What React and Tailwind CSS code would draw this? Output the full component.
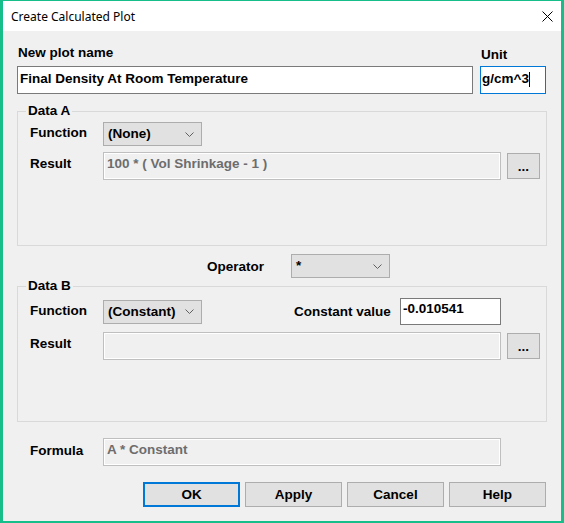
import React from "react";

const F = { fontFamily: '"Liberation Sans", Arial, sans-serif' };

function Chevron() {
  return (
    <svg width="9" height="5" viewBox="0 0 9 5" className="shrink-0">
      <path d="M0.5 0.5 L4.5 4.5 L8.5 0.5" fill="none" stroke="#606060" strokeWidth="1" />
    </svg>
  );
}

function Select({ value, w = "w-[99px]" }) {
  return (
    <div className={`${w} h-[24px] bg-[#e1e1e1] border border-[#adadad] flex items-center pl-[4px] pr-[7px] justify-between`}>
      <span className="text-[13.5px] font-bold text-black leading-none">{value}</span>
      <Chevron />
    </div>
  );
}

function Disabled({ value, w = "w-[398px]" }) {
  return (
    <div className={`${w} h-[28px] bg-[#f0f0f0] border border-[#bfbfbf] shadow-[inset_0_0_0_1px_#ffffff] flex items-center pl-[3px]`}>
      <span className="text-[13.5px] font-bold text-[#6d6d6d] leading-none -mt-[4px]">{value}</span>
    </div>
  );
}

function Dots() {
  return (
    <div className="ml-[6px] w-[33px] h-[26px] bg-[#e1e1e1] border border-[#adadad] flex items-center justify-center">
      <span className="text-[13.5px] font-bold text-black leading-none mt-[1px]">...</span>
    </div>
  );
}

function Label({ children, w = "w-[73px]", m = "-mt-[2px]" }) {
  return <div className={`${w} ${m} text-[13.5px] font-bold text-black leading-none`}>{children}</div>;
}

function Group({ title, children, h }) {
  return (
    <div className={`relative w-[530px] ${h} border border-[#d9d9d9]`}>
      <span className="absolute -top-[8px] left-[8px] bg-[#f0f0f0] px-[2px] text-[13.5px] font-bold text-black leading-none">
        {title}
      </span>
      {children}
    </div>
  );
}

function Button({ children, primary }) {
  return (
    <div
      className={`w-[97px] h-[25px] bg-[#e1e1e1] flex items-center justify-center ${
        primary ? "border-2 border-[#0078d7]" : "border border-[#adadad]"
      }`}
    >
      <span className="text-[13.5px] font-bold text-black leading-none">{children}</span>
    </div>
  );
}

export default function App() {
  return (
    <div className="w-[564px] h-[523px] bg-[#16bf8a] overflow-hidden pt-[1px]" style={F}>
      <div className="ml-[3px] w-[558px] h-[520px] bg-[#f0f0f0] flex flex-col">
        {/* title bar */}
        <div className="h-[30px] bg-white flex items-center justify-between pl-[8px] pr-[8px] shrink-0">
          <span className="text-[12px] text-black mt-[2px]" style={{ fontFamily: '"Noto Sans", "Open Sans", sans-serif' }}>
            Create Calculated Plot
          </span>
          <svg width="11" height="11" viewBox="0 0 11 11" className="mt-[1px]">
            <path d="M0.5 0.5 L10.5 10.5 M10.5 0.5 L0.5 10.5" stroke="#000" strokeWidth="1" />
          </svg>
        </div>

        <div className="pl-[14px] flex flex-col">
          {/* name/unit labels */}
          <div className="flex mt-[15px] h-[14px]">
            <div className="w-[463px] pl-[1px] text-[13.5px] font-bold leading-none">New plot name</div>
            <div className="pl-[1px] text-[13.5px] font-bold leading-none mt-[2px]">Unit</div>
          </div>
          <div className="flex mt-[6px] gap-[7px]">
            <div className="w-[456px] h-[28px] bg-white border border-[#7a7a7a] flex items-center pl-[2px]">
              <span className="text-[13.5px] font-bold leading-none -mt-[3px]">Final Density At Room Temperature</span>
            </div>
            <div className="w-[66px] h-[28px] bg-white border border-[#0078d7] flex items-center pl-[1px]">
              <span className="text-[13.5px] font-bold leading-none -mt-[3px]">g/cm^3</span>
              <span className="w-[1px] h-[15px] bg-black -mt-[1px]"></span>
            </div>
          </div>

          {/* Data A */}
          <div className="mt-[17px]">
            <Group title="Data A" h="h-[135px]">
              <div className="pl-[12px] pt-[10px] flex flex-col">
                <div className="flex items-center">
                  <Label>Function</Label>
                  <Select value="(None)" />
                </div>
                <div className="flex items-center mt-[6px]">
                  <Label m="-mt-[4px]">Result</Label>
                  <Disabled value="100 * ( Vol Shrinkage - 1 )" />
                  <Dots />
                </div>
              </div>
            </Group>
          </div>

          {/* Operator */}
          <div className="flex items-center mt-[8px] pl-[190px]">
            <Label w="w-[84px]" m="mt-[1px]">Operator</Label>
            <Select value="*" />
          </div>

          {/* Data B */}
          <div className="mt-[8px]">
            <Group title="Data B" h="h-[136px]">
              <div className="pl-[12px] pt-[11px] flex flex-col">
                <div className="flex items-center h-[27px]">
                  <Label>Function</Label>
                  <Select value="(Constant)" />
                  <div className="ml-[92px] w-[106px] text-[13.5px] font-bold leading-none">Constant value</div>
                  <div className="w-[101px] h-[27px] bg-white border border-[#7a7a7a] flex items-start pl-[2px] pt-[3px]">
                    <span className="text-[13.5px] font-bold leading-none">-0.010541</span>
                  </div>
                </div>
                <div className="flex items-center mt-[7px]">
                  <Label m="-mt-[4px]">Result</Label>
                  <Disabled value="" />
                  <Dots />
                </div>
              </div>
            </Group>
          </div>

          {/* Formula */}
          <div className="flex items-center mt-[16px] pl-[13px]">
            <Label>Formula</Label>
            <Disabled value="A * Constant" />
          </div>

          {/* buttons */}
          <div className="flex mt-[16px] pl-[126px] gap-[5px]">
            <Button primary>OK</Button>
            <Button>Apply</Button>
            <Button>Cancel</Button>
            <Button>Help</Button>
          </div>
        </div>
      </div>
    </div>
  );
}
